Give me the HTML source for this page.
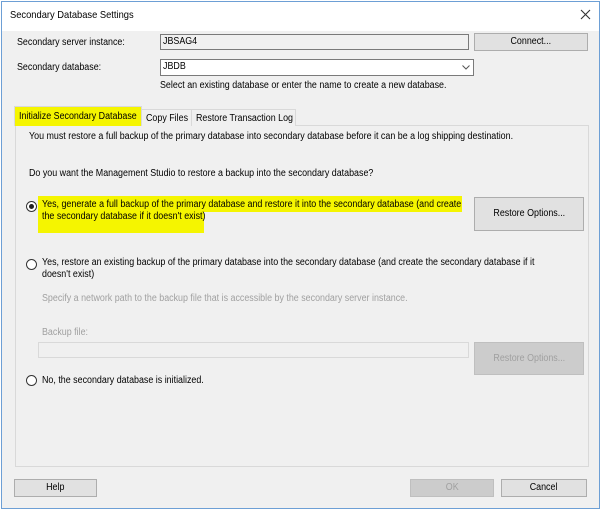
<!DOCTYPE html>
<html><head><style>
*{margin:0;padding:0;box-sizing:border-box}
body{width:602px;height:512px;background:#fff;font-family:"Liberation Sans",sans-serif;font-size:10px;color:#000;position:relative;overflow:hidden}
.a{position:absolute;white-space:nowrap}
.t{transform:scaleX(0.89);transform-origin:0 0}
.win{position:absolute;left:1px;top:1px;width:599px;height:508px;border:1px solid #6d9fd5;background:#f0f0f0}
.title{position:absolute;left:0;top:0;width:597px;height:29px;background:#fff}
.btn{position:absolute;background:#e1e1e1;border:1px solid #adadad;text-align:center}
.btn span{display:inline-block;transform:scaleX(0.89)}
.dis{color:#a0a0a0;background:#cccccc;border-color:#bfbfbf}
.radio{position:absolute;width:11px;height:11px;border:1px solid #333;border-radius:50%;background:#fff}
.g{color:#a0a0a0}
</style></head><body>
<div class="win">
<div class="title"></div>
</div>
<div class="a t" style="left:10px;top:9px;font-size:10.5px">Secondary Database Settings</div>
<svg class="a" style="left:580px;top:9px" width="11" height="11"><path d="M1 1L10 10M10 1L1 10" stroke="#333" stroke-width="1.1"/></svg>

<div class="a t" style="left:17px;top:37px">Secondary server instance:</div>
<div class="a" style="left:160px;top:34px;width:309px;height:16px;background:#f0f0f0;border:1px solid #7a7a7a;padding:1px 2px"><div class="t">JBSAG4</div></div>
<div class="btn" style="left:474px;top:33px;width:114px;height:18px;line-height:16px"><span>Connect...</span></div>

<div class="a t" style="left:17px;top:62px">Secondary database:</div>
<div class="a" style="left:160px;top:59px;width:314px;height:17px;background:#fff;border:1px solid #7a7a7a;padding:1px 2px"><div class="t">JBDB</div></div>
<svg class="a" style="left:462px;top:65px" width="8" height="5"><path d="M0.5 0.5L4 4L7.5 0.5" stroke="#555" fill="none"/></svg>
<div class="a t" style="left:160px;top:80px">Select an existing database or enter the name to create a new database.</div>

<div class="a" style="left:15px;top:125px;width:574px;height:342px;border:1px solid #d9d9d9;background:#f0f0f0"></div>
<div class="a" style="left:141px;top:109px;width:51px;height:17px;border:1px solid #d9d9d9;border-bottom:none;background:#f0f0f0;padding:3px 0 0 4px"><div class="t">Copy Files</div></div>
<div class="a" style="left:191px;top:109px;width:105px;height:17px;border:1px solid #d9d9d9;border-bottom:none;background:#f0f0f0;padding:3px 0 0 4px"><div class="t">Restore Transaction Log</div></div>
<div class="a" style="left:14px;top:106px;width:128px;height:20px;background:#f5f500;border:1px solid #d9d9d9;border-bottom:none"></div>
<div class="a t" style="left:19px;top:111px">Initialize Secondary Database</div>

<div class="a t" style="left:29px;top:131px">You must restore a full backup of the primary database into secondary database before it can be a log shipping destination.</div>
<div class="a t" style="left:29px;top:168px">Do you want the Management Studio to restore a backup into the secondary database?</div>

<div class="a" style="left:38px;top:196px;width:424px;height:16px;background:#f5f500"></div>
<div class="a" style="left:38px;top:211px;width:166px;height:22px;background:#f5f500"></div>
<div class="radio" style="left:26px;top:201px"></div>
<div class="a" style="left:29px;top:204px;width:5px;height:5px;border-radius:50%;background:#222"></div>
<div class="a t" style="left:42px;top:199px;line-height:12px">Yes, generate a full backup of the primary database and restore it into the secondary database (and create<br>the secondary database if it doesn't exist)</div>
<div class="btn" style="left:474px;top:197px;width:110px;height:34px;line-height:32px"><span>Restore Options...</span></div>

<div class="radio" style="left:26px;top:259px"></div>
<div class="a t" style="left:42px;top:257px;line-height:12px">Yes, restore an existing backup of the primary database into the secondary database (and create the secondary database if it<br>doesn't exist)</div>
<div class="a t g" style="left:42px;top:293px">Specify a network path to the backup file that is accessible by the secondary server instance.</div>
<div class="a t g" style="left:42px;top:327px">Backup file:</div>
<div class="a" style="left:38px;top:342px;width:431px;height:16px;border:1px solid #d9d9d9;background:#f0f0f0"></div>
<div class="btn dis" style="left:474px;top:342px;width:110px;height:33px;line-height:31px"><span>Restore Options...</span></div>

<div class="radio" style="left:26px;top:375px"></div>
<div class="a t" style="left:42px;top:375px">No, the secondary database is initialized.</div>

<div class="btn" style="left:14px;top:479px;width:83px;height:18px;line-height:16px"><span>Help</span></div>
<div class="btn dis" style="left:410px;top:479px;width:84px;height:18px;line-height:16px"><span>OK</span></div>
<div class="btn" style="left:501px;top:479px;width:86px;height:18px;line-height:16px"><span>Cancel</span></div>
</body></html>
